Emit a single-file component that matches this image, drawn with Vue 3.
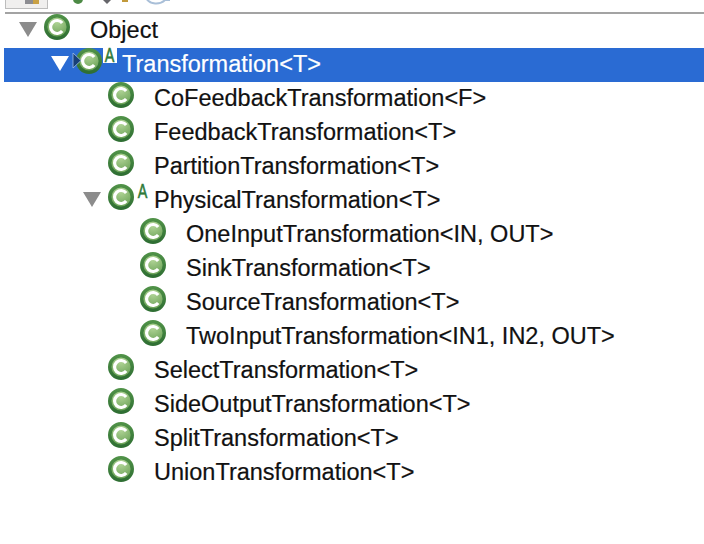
<script setup>
const rows = [
  { name: "Object", depth: 0, open: true },
  { name: "Transformation<T>", depth: 1, open: true, abstract: true, selected: true },
  { name: "CoFeedbackTransformation<F>", depth: 2 },
  { name: "FeedbackTransformation<T>", depth: 2 },
  { name: "PartitionTransformation<T>", depth: 2 },
  { name: "PhysicalTransformation<T>", depth: 2, open: true, abstract: true },
  { name: "OneInputTransformation<IN, OUT>", depth: 3 },
  { name: "SinkTransformation<T>", depth: 3 },
  { name: "SourceTransformation<T>", depth: 3 },
  { name: "TwoInputTransformation<IN1, IN2, OUT>", depth: 3 },
  { name: "SelectTransformation<T>", depth: 2 },
  { name: "SideOutputTransformation<T>", depth: 2 },
  { name: "SplitTransformation<T>", depth: 2 },
  { name: "UnionTransformation<T>", depth: 2 },
];

function indent(depth) {
  return { paddingLeft: `${15 + depth * 32}px` };
}
</script>

<template>
  <div class="page">
    <svg class="toolbar" width="704" height="12" viewBox="0 0 704 12">
      <defs>
        <radialGradient id="class-fill" cx="50%" cy="25%" r="75%">
          <stop offset="0" stop-color="#b4d699" />
          <stop offset="1" stop-color="#639d50" />
        </radialGradient>
        <linearGradient id="class-ring" x1="0" y1="0" x2="0" y2="1">
          <stop offset="0" stop-color="#4f9147" />
          <stop offset="1" stop-color="#2f6f33" />
        </linearGradient>
      </defs>
      <rect x="5.5" y="-4" width="42" height="12.5" fill="#f0efee" stroke="#bdbdbd" />
      <rect x="25" y="-2" width="9" height="6" fill="#8d8d92" />
      <rect x="33" y="0" width="6" height="4" fill="#c9a144" />
      <circle cx="78" cy="-1" r="5" fill="#4c8a45" />
      <path d="M103 0 H111 L107 4 Z" fill="#66666b" />
      <rect x="122" y="-1" width="6" height="3" fill="#c29a3c" />
      <path d="M146 -2 C150 5 160 5 165 0 L170 0" fill="none" stroke="#a9bfd8" stroke-width="2" />
    </svg>
    <div class="rule"></div>
    <ul class="tree">
      <li
        v-for="row in rows"
        :key="row.name"
        class="row"
        :class="{ selected: row.selected }"
        :style="indent(row.depth)"
      >
        <span class="arrow-slot"><span v-if="row.open" class="arrow"></span></span>
        <span class="icon">
          <svg width="28" height="28" viewBox="0 0 28 28">
            <circle cx="14" cy="14" r="11.3" fill="url(#class-fill)" stroke="url(#class-ring)" stroke-width="3.4" />
            <path d="M19.2 10 A6.5 6.5 0 1 0 19.2 18" fill="none" stroke="#fff" stroke-width="3.2" />
          </svg>
          <svg v-if="row.selected" class="marker" width="10" height="17" viewBox="0 0 10 17">
            <path d="M1 1 L9 8.5 L1 16 Z" fill="#173f78" stroke="#9fbde3" stroke-width="0.8" />
          </svg>
          <span v-if="row.abstract" class="badge"><span class="badge-letter">A</span></span>
        </span>
        <span class="label">{{ row.name }}</span>
      </li>
    </ul>
  </div>
</template>

<style>
html,
body {
  margin: 0;
  background: #fff;
}
</style>

<style scoped>
.page {
  width: 704px;
  height: 544px;
  overflow: hidden;
  background: #fff;
  font-family: "Liberation Sans", Arial, sans-serif;
}

.toolbar {
  display: block;
}

.rule {
  height: 2px;
  margin-left: 5px;
  background: #a3a3a3;
}

.tree {
  list-style: none;
  margin: 0;
  padding: 0 0 0 4px;
}

.row {
  display: flex;
  align-items: center;
  height: 34px;
  color: #111;
  font-size: 23.5px;
}

.row.selected {
  background: #2a6bd3;
  color: #fff;
}

.arrow-slot {
  flex: none;
  display: flex;
  width: 24px;
}

.arrow {
  width: 0;
  height: 0;
  margin-top: -3px;
  border-left: 9px solid transparent;
  border-right: 9px solid transparent;
  border-top: 15px solid #8c8c8c;
}

.selected .arrow {
  border-top-color: #fff;
}

.icon {
  position: relative;
  flex: none;
  width: 28px;
  height: 28px;
  margin-top: -8px;
}

.icon > svg:first-child {
  display: block;
}

.marker {
  position: absolute;
  left: -3px;
  top: 5px;
}

.badge {
  position: absolute;
  left: 29px;
  top: 0;
  width: 14px;
  height: 16px;
  display: flex;
  align-items: center;
  justify-content: center;
  color: #2f7a3a;
  font-size: 20px;
  line-height: 16px;
}

.selected .badge {
  left: 28px;
  background: #fff;
}

.badge-letter {
  display: block;
  transform: scaleX(0.72);
  -webkit-text-stroke: 0.5px #2f7a3a;
}

.label {
  margin-left: 19px;
  margin-top: -2px;
  white-space: pre;
  -webkit-text-stroke: 0.2px currentColor;
}
</style>
